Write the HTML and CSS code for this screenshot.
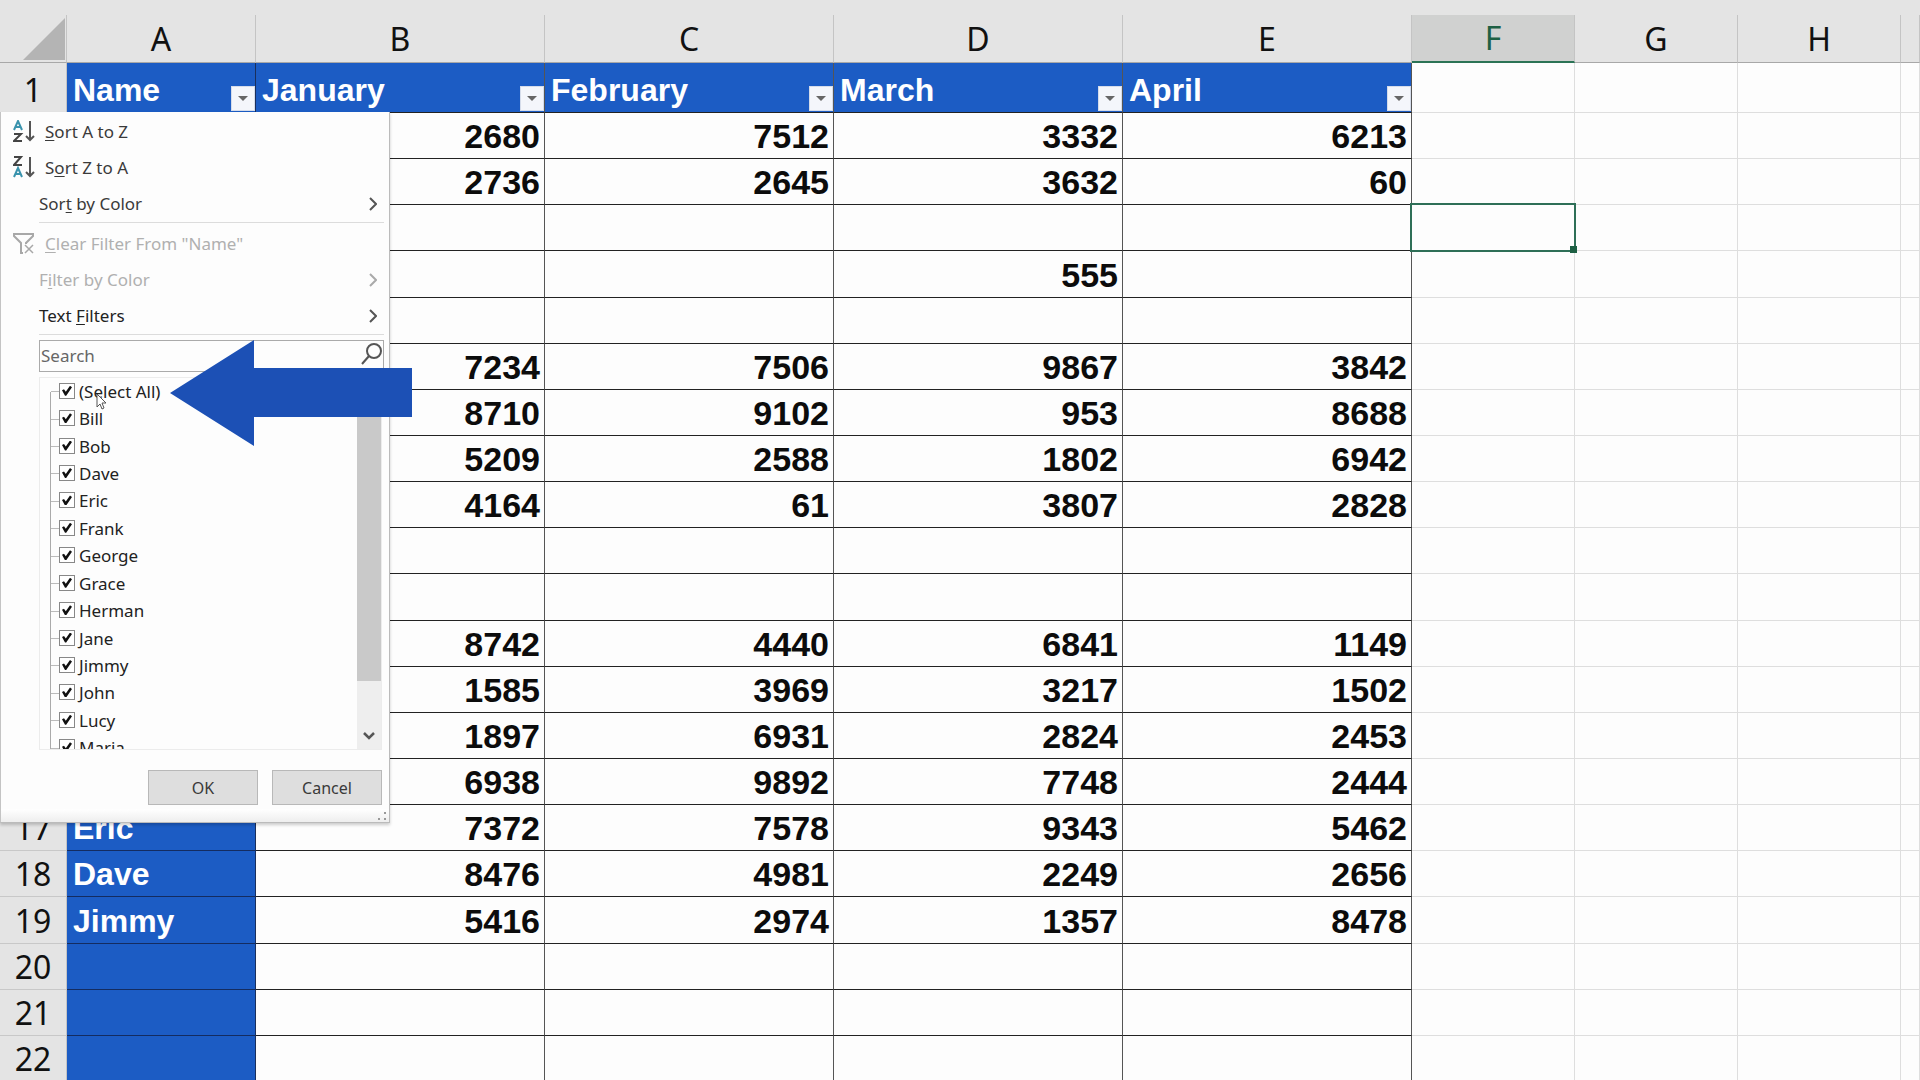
FILE: index.html
```html
<!DOCTYPE html>
<html lang="en">
<head>
  <meta charset="UTF-8" />
  <meta name="viewport" content="width=device-width, initial-scale=1.0"/>
  <title>Monthly Figures</title>
  <link rel="stylesheet" href="styles.css">
</head>
<body>
  <table class="sheet">
    <colgroup>
      <col class="col-num">
      <col class="col-name">
      <col class="col-month" span="4">
      <col class="col-free" span="3">
      <col>
    </colgroup>
    <thead>
      <tr class="spacer"><td colspan="10"></td></tr>
      <tr class="letters">
        <th><svg class="corner" width="42" height="42" viewBox="0 0 42 42"><path d="M42 0V42H0z" fill="#b4b4b4"/></svg></th>
        <th>A</th><th>B</th><th>C</th><th>D</th><th>E</th><th class="active">F</th><th>G</th><th>H</th><th></th>
      </tr>
    </thead>
    <tbody>
      <tr class="fields">
        <th>1</th>
        <td><div class="field">Name <button class="filter-btn" aria-label="Filter Name"></button></div></td>
        <td><div class="field">January <button class="filter-btn" aria-label="Filter January"></button></div></td>
        <td><div class="field">February <button class="filter-btn" aria-label="Filter February"></button></div></td>
        <td><div class="field">March <button class="filter-btn" aria-label="Filter March"></button></div></td>
        <td><div class="field">April <button class="filter-btn" aria-label="Filter April"></button></div></td>
        <td></td><td></td><td></td><td></td>
      </tr>
      <tr><th>2</th><td></td><td>2680</td><td>7512</td><td>3332</td><td>6213</td><td></td><td></td><td></td><td></td></tr>
      <tr><th>3</th><td></td><td>2736</td><td>2645</td><td>3632</td><td>60</td><td></td><td></td><td></td><td></td></tr>
      <tr><th>4</th><td></td><td></td><td></td><td></td><td></td><td class="selected"></td><td></td><td></td><td></td></tr>
      <tr><th>5</th><td></td><td></td><td></td><td>555</td><td></td><td></td><td></td><td></td><td></td></tr>
      <tr><th>6</th><td></td><td></td><td></td><td></td><td></td><td></td><td></td><td></td><td></td></tr>
      <tr><th>7</th><td></td><td>7234</td><td>7506</td><td>9867</td><td>3842</td><td></td><td></td><td></td><td></td></tr>
      <tr><th>8</th><td></td><td>8710</td><td>9102</td><td>953</td><td>8688</td><td></td><td></td><td></td><td></td></tr>
      <tr><th>9</th><td></td><td>5209</td><td>2588</td><td>1802</td><td>6942</td><td></td><td></td><td></td><td></td></tr>
      <tr><th>10</th><td></td><td>4164</td><td>61</td><td>3807</td><td>2828</td><td></td><td></td><td></td><td></td></tr>
      <tr><th>11</th><td></td><td></td><td></td><td></td><td></td><td></td><td></td><td></td><td></td></tr>
      <tr><th>12</th><td></td><td></td><td></td><td></td><td></td><td></td><td></td><td></td><td></td></tr>
      <tr><th>13</th><td></td><td>8742</td><td>4440</td><td>6841</td><td>1149</td><td></td><td></td><td></td><td></td></tr>
      <tr><th>14</th><td></td><td>1585</td><td>3969</td><td>3217</td><td>1502</td><td></td><td></td><td></td><td></td></tr>
      <tr><th>15</th><td></td><td>1897</td><td>6931</td><td>2824</td><td>2453</td><td></td><td></td><td></td><td></td></tr>
      <tr><th>16</th><td></td><td>6938</td><td>9892</td><td>7748</td><td>2444</td><td></td><td></td><td></td><td></td></tr>
      <tr><th>17</th><td>Eric</td><td>7372</td><td>7578</td><td>9343</td><td>5462</td><td></td><td></td><td></td><td></td></tr>
      <tr><th>18</th><td>Dave</td><td>8476</td><td>4981</td><td>2249</td><td>2656</td><td></td><td></td><td></td><td></td></tr>
      <tr><th>19</th><td>Jimmy</td><td>5416</td><td>2974</td><td>1357</td><td>8478</td><td></td><td></td><td></td><td></td></tr>
      <tr><th>20</th><td></td><td></td><td></td><td></td><td></td><td></td><td></td><td></td><td></td></tr>
      <tr><th>21</th><td></td><td></td><td></td><td></td><td></td><td></td><td></td><td></td><td></td></tr>
      <tr><th>22</th><td></td><td></td><td></td><td></td><td></td><td></td><td></td><td></td><td></td></tr>
    </tbody>
  </table>

  <div class="menu">
    <button class="item">
      <svg class="icon" width="22" height="24" viewBox="0 0 22 24" fill="none" stroke-width="2">
        <path d="M1 10L5 1L9 10M2 7H8" stroke="#3a93ad"/>
        <path d="M1 14H8L1 21H9" stroke="#444"/>
        <path d="M17 1V20M13 16L17 20L21 16" stroke="#555" stroke-width="2"/>
      </svg>
      <span><u>S</u>ort A to Z</span>
    </button>
    <button class="item">
      <svg class="icon" width="22" height="24" viewBox="0 0 22 24" fill="none" stroke-width="2">
        <path d="M1 1H8L1 9H9" stroke="#444"/>
        <path d="M1 21L5 12L9 21M2 18H8" stroke="#3a93ad"/>
        <path d="M17 1V20M13 16L17 20L21 16" stroke="#555" stroke-width="2"/>
      </svg>
      <span>S<u>o</u>rt Z to A</span>
    </button>
    <button class="item sub">
      <span>Sor<u>t</u> by Color</span>
      <svg class="chevron" width="8" height="14" viewBox="0 0 8 14"><path d="M1 1L7 7L1 13"/></svg>
    </button>
    <hr>
    <button class="item" disabled>
      <svg class="icon" width="22" height="24" viewBox="0 0 22 24" fill="none" stroke="#a8a8a8" stroke-width="2">
        <path d="M10 21H8V11L1 4V2H20V4L13 11V12"/>
        <path d="M12 13L20 21M20 13L12 21" stroke-width="1.5"/>
      </svg>
      <span><u>C</u>lear Filter From "Name"</span>
    </button>
    <button class="item sub" disabled>
      <span>F<u>i</u>lter by Color</span>
      <svg class="chevron" width="8" height="14" viewBox="0 0 8 14"><path d="M1 1L7 7L1 13"/></svg>
    </button>
    <button class="item sub strong">
      <span>Text <u>F</u>ilters</span>
      <svg class="chevron" width="8" height="14" viewBox="0 0 8 14"><path d="M1 1L7 7L1 13"/></svg>
    </button>
    <hr>
    <div class="search">
      <input type="text" placeholder="Search" aria-label="Search">
      <svg width="22" height="22" viewBox="0 0 22 22" fill="none" stroke="#555" stroke-width="2"><circle cx="13" cy="8" r="7"/><path d="M8 13L1 21"/></svg>
    </div>
    <div class="values">
      <ul class="tree">
        <li><label><input type="checkbox" checked>(Select All)</label></li>
        <li><label><input type="checkbox" checked>Bill</label></li>
        <li><label><input type="checkbox" checked>Bob</label></li>
        <li><label><input type="checkbox" checked>Dave</label></li>
        <li><label><input type="checkbox" checked>Eric</label></li>
        <li><label><input type="checkbox" checked>Frank</label></li>
        <li><label><input type="checkbox" checked>George</label></li>
        <li><label><input type="checkbox" checked>Grace</label></li>
        <li><label><input type="checkbox" checked>Herman</label></li>
        <li><label><input type="checkbox" checked>Jane</label></li>
        <li><label><input type="checkbox" checked>Jimmy</label></li>
        <li><label><input type="checkbox" checked>John</label></li>
        <li><label><input type="checkbox" checked>Lucy</label></li>
        <li><label><input type="checkbox" checked>Maria</label></li>
      </ul>
      <div class="scrollbar">
        <div class="thumb"></div>
        <svg width="12" height="8" viewBox="0 0 12 8" fill="none" stroke="#555" stroke-width="2.5"><path d="M1 1L6 6L11 1"/></svg>
      </div>
    </div>
    <div class="actions">
      <button>OK</button>
      <button>Cancel</button>
    </div>
    <div class="grip">
      <svg width="12" height="10" viewBox="0 0 12 10" fill="#999"><path d="M7 0h2v2h-2zM7 6h2v2h-2zM1 6h2v2h-2z"/></svg>
    </div>
  </div>

  <svg class="pointer" width="12" height="18" viewBox="0 0 12 18"><path d="M1 1V14L4 11L6 16L8 15L6 10H10z" fill="#fff" stroke="#555"/></svg>
  <svg class="arrow" width="242" height="106" viewBox="0 0 242 106"><path d="M0 53L84 0V28H242V77H84V106z" fill="#1c50b5"/></svg>
</body>
</html>
```
FILE: styles.css
```css
* {
  box-sizing: border-box;
}

body {
  margin: 0;
  position: relative;
  height: 100vh;
  overflow: hidden;
  background-color: #fdfdfd;
  font-family: 'Noto Sans', 'Open Sans', sans-serif;
}

button, input {
  font: inherit;
  color: inherit;
}

/* Sheet */
.sheet {
  width: 100%;
  height: calc(100vh + 2px);
  table-layout: fixed;
  border-spacing: 0;
}

.col-num {
  width: 67px;
}

.col-name {
  width: 189px;
}

.col-month {
  width: 289px;
}

.col-free {
  width: 163px;
}

.sheet th, .sheet td {
  padding: 0;
  font-size: 32px;
  line-height: 44px;
  white-space: nowrap;
  vertical-align: bottom;
}

.sheet th {
  font-weight: normal;
  color: #111;
  background-color: #e4e4e4;
}

.spacer td {
  height: 15px;
  background-color: #e4e4e4;
}

.letters th {
  height: 48px;
  border-right: 1px solid #c4c4c4;
  border-bottom: 1px solid #a8a8a8;
  vertical-align: middle;
}

.letters .active {
  color: #1e6044;
  background-color: #d0d1d0;
  border-bottom: 2px solid #2b7355;
}

.corner {
  display: block;
  margin-left: 23px;
}

.sheet tbody th {
  border-right: 1px solid #c4c4c4;
  border-bottom: 1px solid #c8c8c8;
}

.sheet tbody td {
  font-family: 'Liberation Sans', Arial, sans-serif;
  font-weight: bold;
  font-size: 34px;
  text-align: right;
  color: #0c0c0c;
  border-right: 1px solid #dedede;
  border-bottom: 1px solid #dedede;
}

.sheet tbody td:nth-child(-n+6) {
  padding-right: 4px;
  border-right-color: #555;
  border-bottom-color: #222;
}

.sheet tbody td:nth-child(2),
.sheet .fields td:nth-child(-n+6) {
  padding-left: 6px;
  font-size: 32px;
  text-align: left;
  color: #fff;
  background-color: #1c5cc4;
}

.sheet tbody td:nth-child(2) {
  border-right-color: #1a2f5c;
  border-bottom-color: #142c60;
}

.sheet .fields th, .sheet .fields td {
  height: 50px;
}

.sheet .fields td:nth-child(-n+6) {
  padding-right: 0;
}

.field {
  display: flex;
  justify-content: space-between;
  align-items: flex-end;
}

.filter-btn {
  width: 24px;
  height: 25px;
  margin-bottom: 1px;
  padding: 0;
  border: 1px solid #d5dcea;
  background-color: #f4f6fb;
}

.filter-btn::before {
  content: '';
  display: block;
  width: 10px;
  height: 5px;
  margin: 0 auto;
  background-color: #666;
  clip-path: polygon(0 0, 100% 0, 50% 100%);
}

.selected {
  position: relative;
}

.selected::before {
  content: '';
  position: absolute;
  inset: -2px;
  border: 2px solid #2e6f57;
}

.selected::after {
  content: '';
  position: absolute;
  right: -3px;
  bottom: -3px;
  width: 7px;
  height: 7px;
  background-color: #1e6044;
}

/* Filter menu */
.menu {
  position: absolute;
  top: 112px;
  left: 0;
  width: 390px;
  padding-top: 2px;
  font-size: 17px;
  color: #3a3a3a;
  background-color: #fdfdfd;
  border-left: 1px solid #c4c4c4;
  border-right: 1px solid #bbb;
  border-bottom: 1px solid #bbb;
  box-shadow: 0 2px 3px rgba(0, 0, 0, 0.2);
}

.item {
  display: flex;
  align-items: center;
  width: 100%;
  height: 36px;
  padding: 0 12px;
  border: none;
  background: none;
  line-height: 24px;
  text-align: left;
}

.item u {
  text-underline-offset: 2px;
}

.item:disabled {
  color: #b0b0b0;
}

.icon {
  margin-right: 10px;
}

.sub {
  padding-left: 38px;
}

.strong {
  color: #222;
}

.chevron {
  margin-left: auto;
  fill: none;
  stroke: #555;
  stroke-width: 2;
}

.item:disabled .chevron {
  stroke: #aaa;
}

.menu hr {
  margin: 0 5px 3px 38px;
  border: none;
  border-top: 1px solid #dcdcdc;
}

.search {
  display: flex;
  align-items: center;
  height: 32px;
  margin: 5px 5px 5px 38px;
  border: 1px solid #aaa;
}

.search input {
  flex: 1;
  min-width: 0;
  padding: 0 1px 2px;
  border: none;
  outline: none;
  background: none;
}

.search svg {
  margin-bottom: 4px;
}

.search input::placeholder {
  color: #666;
}

.values {
  display: flex;
  justify-content: space-between;
  height: 373px;
  margin: 0 7px 0 38px;
  overflow: hidden;
  border: 1px solid #ececec;
}

.tree {
  display: grid;
  grid-auto-rows: 1fr;
  height: 384px;
  margin: 0;
  padding: 0 0 0 10px;
  list-style: none;
}

.tree li {
  display: flex;
  align-items: center;
  border-left: 1px solid #aaa;
}

.tree li:first-child {
  border-image: linear-gradient(transparent 50%, #aaa 50%) 1;
}

.tree li::before {
  content: '';
  width: 8px;
  border-top: 1px solid #bbb;
}

.tree label {
  display: flex;
  align-items: center;
  gap: 4px;
  line-height: 24px;
  color: #222;
}

.tree input {
  appearance: none;
  width: 16px;
  height: 16px;
  margin: 0 0 2px;
  padding: 2px;
  border: 1px solid #888;
  background-color: #fff;
}

.tree input:checked::before {
  content: '';
  display: block;
  height: 10px;
  background-color: #111;
  clip-path: polygon(0 45%, 20% 35%, 38% 60%, 80% 0, 100% 15%, 42% 100%, 30% 100%);
}

.scrollbar {
  display: flex;
  flex-direction: column;
  justify-content: space-between;
  align-items: center;
  width: 24px;
  padding: 24px 0 9px;
  background-color: #eee;
}

.thumb {
  width: 100%;
  height: 279px;
  background-color: #c9c9c9;
}

.actions {
  display: flex;
  justify-content: flex-end;
  gap: 14px;
  padding: 20px 7px 4px;
}

.actions button {
  width: 110px;
  height: 35px;
  padding: 0;
  font-size: 16px;
  border: 1px solid #b8b8b8;
  background-color: #dedede;
}

.grip {
  display: flex;
  justify-content: flex-end;
  align-items: flex-end;
  height: 13px;
  background: linear-gradient(#fff, #eee);
}

/* Pointer and callout */
.pointer {
  position: absolute;
  top: 393px;
  left: 96px;
}

.arrow {
  position: absolute;
  top: 340px;
  left: 170px;
}
```
